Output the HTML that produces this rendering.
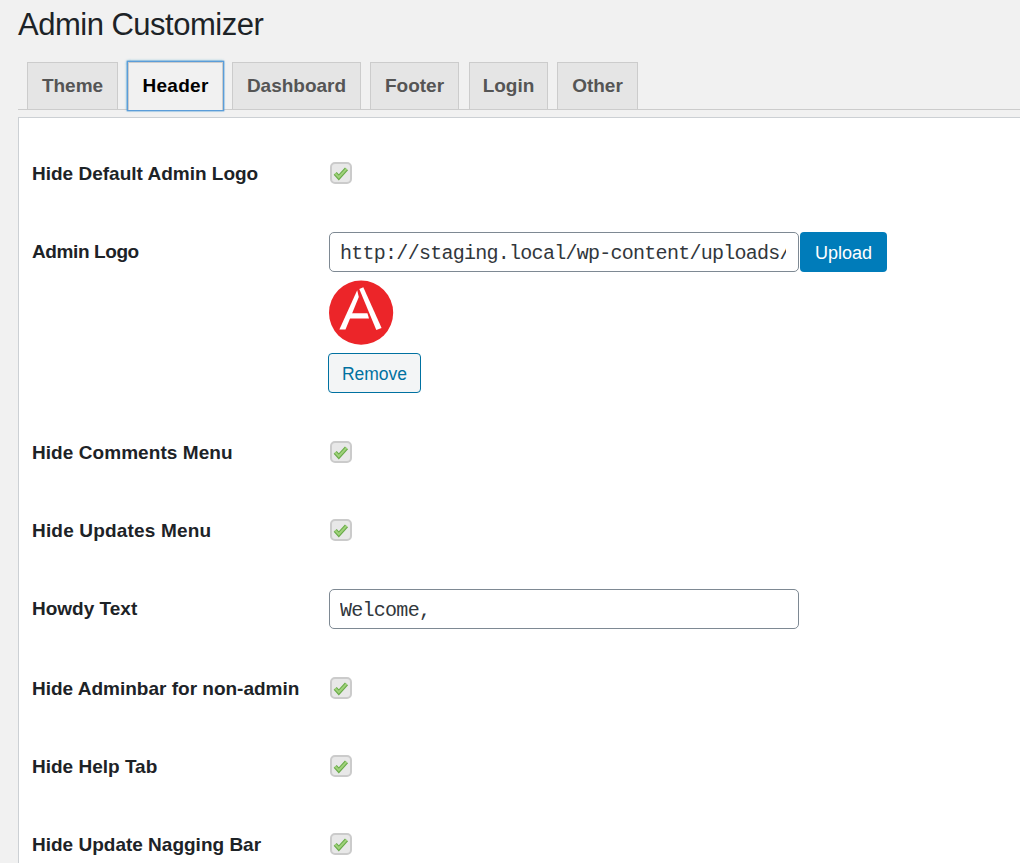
<!DOCTYPE html>
<html><head><meta charset="utf-8">
<style>
html,body{margin:0;padding:0;}
body{width:1020px;height:863px;overflow:hidden;background:#f1f1f1;font-family:"Liberation Sans",sans-serif;color:#23282d;position:relative;}
.a{position:absolute;white-space:nowrap;}
h1{position:absolute;margin:0;left:18px;top:5px;font-size:31px;letter-spacing:-0.5px;font-weight:400;line-height:40px;color:#1d2327;}
.tabline{position:absolute;left:18px;top:109px;width:1002px;height:1px;background:#ccc;}
.tab{position:absolute;top:62px;height:47px;box-sizing:border-box;border:1px solid #ccc;border-bottom:none;background:#e5e5e5;color:#555;font-weight:700;font-size:19px;line-height:46px;text-align:center;}
.tab.act{background:#f1f1f1;color:#000;height:48px;box-shadow:0 0 0 1.33px #5b9dd9, 0 0 2.67px 1.33px rgba(30,140,190,.8);border-color:#ccc;letter-spacing:0.3px;}
.panel{position:absolute;left:18px;top:117px;width:1010px;height:800px;background:#fff;border:1px solid #ccd0d4;box-sizing:border-box;}
.lbl{position:absolute;left:32px;font-size:19px;font-weight:700;line-height:24px;color:#1d2327;}
.cb{position:absolute;left:330px;width:22px;height:22px;}
.cb i{position:absolute;left:0;top:0;width:22px;height:22px;box-sizing:border-box;border:2px solid #cbcbcb;border-radius:5px;background:#e8e8e8;}
.cb svg{position:absolute;left:0;top:0;}
.inp{position:absolute;left:329px;width:470px;height:40px;box-sizing:border-box;border:1px solid #7e8993;border-radius:5px;background:#fff;font-family:"Liberation Mono",monospace;font-size:20px;letter-spacing:-0.73px;line-height:41px;padding-left:10px;color:#32373c;white-space:nowrap;}
.inp span{display:block;width:446px;overflow:hidden;}
.btn{position:absolute;box-sizing:border-box;border-radius:4px;font-size:19px;text-align:center;}
</style></head><body>
<h1>Admin Customizer</h1>
<div class="tabline"></div>
<div class="tab" style="left:27px;width:91px;">Theme</div>
<div class="tab act" style="left:128px;width:95px;">Header</div>
<div class="tab" style="left:232px;width:129px;">Dashboard</div>
<div class="tab" style="left:370px;width:89px;">Footer</div>
<div class="tab" style="left:469px;width:79px;">Login</div>
<div class="tab" style="left:557px;width:81px;">Other</div>
<div class="panel"></div>

<div class="lbl" style="top:162px;">Hide Default Admin Logo</div>
<div class="cb" style="top:162px;"><i></i><svg width="22" height="22" viewBox="0 0 22 22"><path d="M5.2 11.4 L8.8 15.3 L16.5 6.9" fill="none" stroke="#68aa48" stroke-width="4.2" stroke-linejoin="miter" stroke-linecap="butt"/><path d="M5.2 11.4 L8.8 15.3 L16.5 6.9" fill="none" stroke="#9fd27a" stroke-width="2.1" stroke-linejoin="miter" stroke-linecap="butt"/></svg></div>

<div class="lbl" style="top:240px;letter-spacing:-0.4px;">Admin Logo</div>
<div class="inp" style="top:232px;"><span>http://staging.local/wp-content/uploads/</span></div>
<div class="btn" style="left:800px;top:232px;width:87px;height:40px;background:#007cba;color:#fff;line-height:42px;font-size:18px;">Upload</div>

<svg class="a" style="left:326px;top:278px" width="70" height="70" viewBox="0 0 70 70"><circle cx="35.1" cy="34.7" r="32.1" fill="#ec2529"/><g fill="#fff"><polygon points="13.4,51.5 19.5,51.5 32.8,19.1 31.2,12.2"/><polygon points="33.3,10.9 37.3,9.3 55.6,49.9 50.3,51.9"/><polygon points="24.3,35.3 41.4,35.3 43,40.6 22.3,40.6"/></g></svg>
<div class="btn" style="left:328px;top:353px;width:93px;height:40px;background:#f3f5f6;border:1.33px solid #0071a1;color:#0071a1;line-height:40px;font-size:17.5px;">Remove</div>

<div class="lbl" style="top:441px;letter-spacing:0.06px;">Hide Comments Menu</div>
<div class="cb" style="top:441px;"><i></i><svg width="22" height="22" viewBox="0 0 22 22"><path d="M5.2 11.4 L8.8 15.3 L16.5 6.9" fill="none" stroke="#68aa48" stroke-width="4.2" stroke-linejoin="miter" stroke-linecap="butt"/><path d="M5.2 11.4 L8.8 15.3 L16.5 6.9" fill="none" stroke="#9fd27a" stroke-width="2.1" stroke-linejoin="miter" stroke-linecap="butt"/></svg></div>

<div class="lbl" style="top:519px;letter-spacing:0.18px;">Hide Updates Menu</div>
<div class="cb" style="top:519px;"><i></i><svg width="22" height="22" viewBox="0 0 22 22"><path d="M5.2 11.4 L8.8 15.3 L16.5 6.9" fill="none" stroke="#68aa48" stroke-width="4.2" stroke-linejoin="miter" stroke-linecap="butt"/><path d="M5.2 11.4 L8.8 15.3 L16.5 6.9" fill="none" stroke="#9fd27a" stroke-width="2.1" stroke-linejoin="miter" stroke-linecap="butt"/></svg></div>

<div class="lbl" style="top:597px;">Howdy Text</div>
<div class="inp" style="top:589px;"><span>Welcome,</span></div>

<div class="lbl" style="top:677px;">Hide Adminbar for non-admin</div>
<div class="cb" style="top:677px;"><i></i><svg width="22" height="22" viewBox="0 0 22 22"><path d="M5.2 11.4 L8.8 15.3 L16.5 6.9" fill="none" stroke="#68aa48" stroke-width="4.2" stroke-linejoin="miter" stroke-linecap="butt"/><path d="M5.2 11.4 L8.8 15.3 L16.5 6.9" fill="none" stroke="#9fd27a" stroke-width="2.1" stroke-linejoin="miter" stroke-linecap="butt"/></svg></div>

<div class="lbl" style="top:755px;">Hide Help Tab</div>
<div class="cb" style="top:755px;"><i></i><svg width="22" height="22" viewBox="0 0 22 22"><path d="M5.2 11.4 L8.8 15.3 L16.5 6.9" fill="none" stroke="#68aa48" stroke-width="4.2" stroke-linejoin="miter" stroke-linecap="butt"/><path d="M5.2 11.4 L8.8 15.3 L16.5 6.9" fill="none" stroke="#9fd27a" stroke-width="2.1" stroke-linejoin="miter" stroke-linecap="butt"/></svg></div>

<div class="lbl" style="top:833px;">Hide Update Nagging Bar</div>
<div class="cb" style="top:833px;"><i></i><svg width="22" height="22" viewBox="0 0 22 22"><path d="M5.2 11.4 L8.8 15.3 L16.5 6.9" fill="none" stroke="#68aa48" stroke-width="4.2" stroke-linejoin="miter" stroke-linecap="butt"/><path d="M5.2 11.4 L8.8 15.3 L16.5 6.9" fill="none" stroke="#9fd27a" stroke-width="2.1" stroke-linejoin="miter" stroke-linecap="butt"/></svg></div>
</body></html>
